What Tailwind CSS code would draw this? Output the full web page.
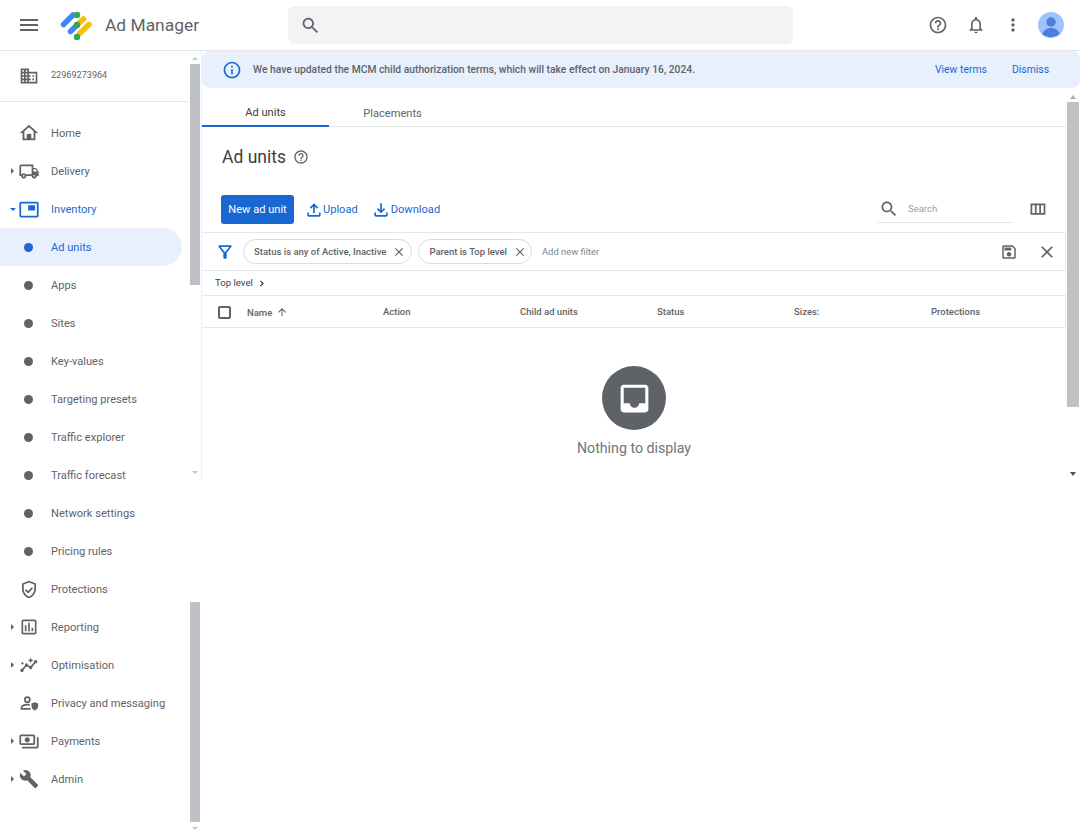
<!DOCTYPE html>
<html lang="en">
<head>
<meta charset="UTF-8">
<title>Ad Manager</title>
<script src="https://cdn.jsdelivr.net/npm/@tailwindcss/browser@4"></script>
</head>
<body class="bg-white font-['Roboto',sans-serif] text-[#5f6368] text-[11.1px] overflow-hidden h-[836px]">

<!-- top bar -->
<header class="h-[51px] flex items-center border-b border-[#e3e5e8]">
  <button class="w-[24px] h-[24px] ml-[17px] text-[#5f6368]">
    <svg viewBox="0 0 24 24" class="w-[24px] h-[24px]" fill="currentColor"><path d="M3 18h18v-2H3v2zm0-5h18v-2H3v2zm0-7v2h18V6H3z"/></svg>
  </button>
  <svg viewBox="0 0 34 34" class="w-[34px] h-[34px] ml-[19px]" fill="none" stroke-linecap="round" stroke-width="5.5">
    <path d="M3.500 16.500L13 7" stroke="#4285f4"/>
    <path d="M10.500 23.500L17 17" stroke="#4285f4"/>
    <path d="M17 17L23.500 11" stroke="#fbbc04"/>
    <path d="M19.500 25.500L29 16.500" stroke="#fbbc04"/>
    <circle cx="17" cy="7" r="3.200" fill="#34a853" stroke="none"/>
    <circle cx="17" cy="17" r="3.200" fill="#34a853" stroke="none"/>
    <circle cx="17" cy="29" r="3.200" fill="#34a853" stroke="none"/>
  </svg>
  <span class="ml-[11px] mt-[1px] text-[17.400px] text-[#5f6368] w-[113px]">Ad Manager</span>
  <div class="ml-[70px] w-[505px] h-[38px] rounded-[6px] bg-[#f1f3f4] flex items-center pl-[12px]">
    <svg viewBox="0 0 24 24" class="w-[21px] h-[21px]" fill="#5f6368"><path d="M15.500 14h-.79l-.28-.27C15.410 12.590 16 11.110 16 9.500 16 5.910 13.090 3 9.500 3S3 5.910 3 9.500 5.910 16 9.500 16c1.610 0 3.090-.59 4.230-1.570l.27.28v.79l5 4.990L20.490 19l-4.990-5zm-6 0C7.010 14 5 11.990 5 9.500S7.010 5 9.500 5 14 7.010 14 9.500 11.990 14 9.500 14z"/></svg>
  </div>
  <div class="ml-auto flex items-center pr-[16px]">
    <svg viewBox="0 0 24 24" class="w-[20px] h-[20px]" fill="#5f6368"><path d="M11 18h2v-2h-2v2zm1-16C6.480 2 2 6.480 2 12s4.480 10 10 10 10-4.480 10-10S17.520 2 12 2zm0 18c-4.410 0-8-3.590-8-8s3.590-8 8-8 8 3.590 8 8-3.590 8-8 8zm0-14c-2.210 0-4 1.790-4 4h2c0-1.100.9-2 2-2s2 .9 2 2c0 2-3 1.750-3 5h2c0-2.250 3-2.500 3-5 0-2.210-1.790-4-4-4z"/></svg>
    <svg viewBox="0 0 24 24" class="w-[20px] h-[20px] ml-[18px]" fill="#5f6368"><path d="M12 22c1.100 0 2-.9 2-2h-4c0 1.100.9 2 2 2zm6-6v-5c0-3.070-1.630-5.640-4.500-6.320V4c0-.83-.67-1.500-1.500-1.500s-1.500.67-1.500 1.500v.68C7.640 5.360 6 7.920 6 11v5l-2 2v1h16v-1l-2-2zm-2 1H8v-6c0-2.480 1.510-4.500 4-4.500s4 2.020 4 4.500v6z"/></svg>
    <svg viewBox="0 0 24 24" class="w-[20px] h-[20px] ml-[17px]" fill="#5f6368"><path d="M12 8c1.100 0 2-.9 2-2s-.9-2-2-2-2 .9-2 2 .9 2 2 2zm0 2c-1.100 0-2 .9-2 2s.9 2 2 2 2-.9 2-2-.9-2-2-2zm0 6c-1.100 0-2 .9-2 2s.9 2 2 2 2-.9 2-2-.9-2-2-2z"/></svg>
    <svg viewBox="0 0 26 26" class="w-[26px] h-[26px] ml-[15px]"><circle cx="13" cy="13" r="13" fill="#a0c3ff"/><circle cx="13" cy="10" r="4.700" fill="#4b7fdb"/><path d="M4.500 22c1-4 4.500-6 8.500-6s7.500 2 8.500 6a13 13 0 0 1-17 0z" fill="#4b7fdb"/></svg>
  </div>
</header>

<div class="flex">
  <!-- side nav -->
  <aside class="relative w-[201px] shrink-0 h-[785px]">
    <div class="w-[188px] h-[51px] flex items-center border-b border-[#e3e5e8]">
      <svg viewBox="0 0 24 24" class="w-[20px] h-[20px] ml-[19px]" fill="#5f6368"><path d="M12 7V3H2v18h20V7H12zM6 19H4v-2h2v2zm0-4H4v-2h2v2zm0-4H4V9h2v2zm0-4H4V5h2v2zm4 12H8v-2h2v2zm0-4H8v-2h2v2zm0-4H8V9h2v2zm0-4H8V5h2v2zm10 12h-8v-2h2v-2h-2v-2h2v-2h-2V9h8v10zm-2-8h-2v2h2v-2zm0 4h-2v2h2v-2z"/></svg>
      <span class="ml-[12px] text-[9.100px]">22969273964</span>
    </div>
    <nav class="pt-[12px]">
      <a class="h-[38px] flex items-center pl-[17px]">
        <svg viewBox="0 0 24 24" class="w-[24px] h-[22px]" fill="#5f6368"><path d="M12 5.690l5 4.500V18H7v-7.810l5-4.500M12 3L2 12h3v8h14v-8h3L12 3z"/><rect x="9.500" y="13" width="5" height="6"/></svg>
        <span class="ml-[10px] pt-[2px]">Home</span>
      </a>
      <a class="h-[38px] flex items-center pl-[11px]">
        <span class="w-0 h-0 border-y-[3px] border-y-transparent border-l-[3px] border-l-[#5f6368]"></span>
        <svg viewBox="0 0 24 24" class="w-[24px] h-[21px] ml-[3px]" fill="#5f6368"><path d="M20 8h-3V4H3c-1.100 0-2 .9-2 2v11h2c0 1.660 1.340 3 3 3s3-1.340 3-3h6c0 1.660 1.340 3 3 3s3-1.340 3-3h2v-5l-3-4zm-.5 1.500l1.960 2.500H17V9.500h2.500zM6 18c-.55 0-1-.45-1-1s.45-1 1-1 1 .45 1 1-.45 1-1 1zm2.220-3c-.55-.61-1.330-1-2.220-1s-1.670.39-2.220 1H3V6h12v9H8.220zM18 18c-.55 0-1-.45-1-1s.45-1 1-1 1 .45 1 1-.45 1-1 1z"/></svg>
        <span class="ml-[10px] pt-[2px]">Delivery</span>
      </a>
      <a class="h-[38px] flex items-center pl-[10px] text-[#1967d2]">
        <span class="w-0 h-0 border-x-[3px] border-x-transparent border-t-[3px] border-t-[#1967d2]"></span>
        <svg viewBox="0 0 24 24" class="w-[24px] h-[21px] ml-[1px]" fill="#1967d2"><path d="M19 7h-8v6h8V7zm2-4H3c-1.100 0-2 .9-2 2v14c0 1.100.9 2 2 2h18c1.100 0 2-.9 2-2V5c0-1.100-.9-2-2-2zm0 16H3V5h18v14z"/></svg>
        <span class="ml-[10px] pt-[2px]">Inventory</span>
      </a>
      <a class="h-[38px] w-[182px] flex items-center pl-[24px] rounded-r-full bg-[#e8f0fe] text-[#1967d2]">
        <span class="w-[9px] h-[9px] rounded-full bg-[#1967d2]"></span>
        <span class="ml-[18px] pt-[2px]">Ad units</span>
      </a>
      <a class="h-[38px] flex items-center pl-[24px]"><span class="w-[9px] h-[9px] rounded-full bg-[#5f6368]"></span><span class="ml-[18px] pt-[2px]">Apps</span></a>
      <a class="h-[38px] flex items-center pl-[24px]"><span class="w-[9px] h-[9px] rounded-full bg-[#5f6368]"></span><span class="ml-[18px] pt-[2px]">Sites</span></a>
      <a class="h-[38px] flex items-center pl-[24px]"><span class="w-[9px] h-[9px] rounded-full bg-[#5f6368]"></span><span class="ml-[18px] pt-[2px]">Key-values</span></a>
      <a class="h-[38px] flex items-center pl-[24px]"><span class="w-[9px] h-[9px] rounded-full bg-[#5f6368]"></span><span class="ml-[18px] pt-[2px]">Targeting presets</span></a>
      <a class="h-[38px] flex items-center pl-[24px]"><span class="w-[9px] h-[9px] rounded-full bg-[#5f6368]"></span><span class="ml-[18px] pt-[2px]">Traffic explorer</span></a>
      <a class="h-[38px] flex items-center pl-[24px]"><span class="w-[9px] h-[9px] rounded-full bg-[#5f6368]"></span><span class="ml-[18px] pt-[2px]">Traffic forecast</span></a>
      <a class="h-[38px] flex items-center pl-[24px]"><span class="w-[9px] h-[9px] rounded-full bg-[#5f6368]"></span><span class="ml-[18px] pt-[2px]">Network settings</span></a>
      <a class="h-[38px] flex items-center pl-[24px]"><span class="w-[9px] h-[9px] rounded-full bg-[#5f6368]"></span><span class="ml-[18px] pt-[2px]">Pricing rules</span></a>
      <a class="h-[38px] flex items-center pl-[17px]">
        <svg viewBox="0 0 24 24" class="w-[24px] h-[21px]" fill="#5f6368"><path d="M12 2L4 5v6.090c0 5.050 3.410 9.760 8 10.910 4.590-1.150 8-5.860 8-10.910V5l-8-3zm6 9.090c0 4-2.550 7.700-6 8.830-3.450-1.130-6-4.820-6-8.830v-4.700l6-2.250 6 2.250v4.700zm-9.180.5L7.400 13l3.540 3.540 5.660-5.660-1.410-1.410-4.250 4.240-1.920-1.620z"/></svg>
        <span class="ml-[10px] pt-[2px]">Protections</span>
      </a>
      <a class="h-[38px] flex items-center pl-[11px]">
        <span class="w-0 h-0 border-y-[3px] border-y-transparent border-l-[3px] border-l-[#5f6368]"></span>
        <svg viewBox="0 0 24 24" class="w-[24px] h-[20px] ml-[3px]" fill="#5f6368"><path d="M19 3H5c-1.100 0-2 .9-2 2v14c0 1.100.9 2 2 2h14c1.100 0 2-.9 2-2V5c0-1.100-.9-2-2-2zm0 16H5V5h14v14zM7 10h2v7H7zm4-3h2v10h-2zm4 6h2v4h-2z"/></svg>
        <span class="ml-[10px] pt-[2px]">Reporting</span>
      </a>
      <a class="h-[38px] flex items-center pl-[11px]">
        <span class="w-0 h-0 border-y-[3px] border-y-transparent border-l-[3px] border-l-[#5f6368]"></span>
        <svg viewBox="0 0 24 24" class="w-[24px] h-[20px] ml-[3px]" fill="#5f6368"><path d="M3 19l6-7 5 3 6-7" fill="none" stroke="#5f6368" stroke-width="2"/><circle cx="3.500" cy="18.500" r="2"/><circle cx="9" cy="12" r="2"/><circle cx="14" cy="15" r="2"/><circle cx="20" cy="8" r="2"/><path d="M14 3l1 2.500 2.500 1-2.500 1-1 2.500-1-2.500-2.500-1 2.500-1zM4 8l.7 1.300L6 10l-1.300.7L4 12l-.7-1.300L2 10l1.300-.7z"/></svg>
        <span class="ml-[10px] pt-[2px]">Optimisation</span>
      </a>
      <a class="h-[38px] flex items-center pl-[17px]">
        <svg viewBox="0 0 24 24" class="w-[24px] h-[20px]" fill="#5f6368"><path d="M10 4a4 4 0 1 0 0 8 4 4 0 0 0 0-8zm0 2a2 2 0 1 1 0 4 2 2 0 0 1 0-4zM10 13c-3.500 0-8 1.700-8 4.500V20h12v-2H4v-.5c0-1 3.300-2.500 6-2.500 1 0 2 .2 3 .5v-2c-1-.3-2-.5-3-.5z"/><path d="M19 11l-4 1.500v3c0 2.500 1.700 4.500 4 5.500 2.300-1 4-3 4-5.500v-3z"/></svg>
        <span class="ml-[10px] pt-[2px]">Privacy and messaging</span>
      </a>
      <a class="h-[38px] flex items-center pl-[11px]">
        <span class="w-0 h-0 border-y-[3px] border-y-transparent border-l-[3px] border-l-[#5f6368]"></span>
        <svg viewBox="0 0 24 24" class="w-[24px] h-[21px] ml-[3px]" fill="#5f6368"><path d="M19 14V6c0-1.100-.9-2-2-2H3c-1.100 0-2 .9-2 2v8c0 1.100.9 2 2 2h14c1.100 0 2-.9 2-2zm-2 0H3V6h14v8zm-7-7c-1.660 0-3 1.340-3 3s1.340 3 3 3 3-1.340 3-3-1.340-3-3-3zm13 0v11c0 1.100-.9 2-2 2H4v-2h17V7h2z"/></svg>
        <span class="ml-[10px] pt-[2px]">Payments</span>
      </a>
      <a class="h-[38px] flex items-center pl-[11px]">
        <span class="w-0 h-0 border-y-[3px] border-y-transparent border-l-[3px] border-l-[#5f6368]"></span>
        <svg viewBox="0 0 24 24" class="w-[24px] h-[20px] ml-[3px]" fill="#5f6368"><path d="M22.700 19l-9.100-9.100c.9-2.300.4-5-1.500-6.900-2-2-5-2.400-7.400-1.300L9 6 6 9 1.600 4.700C.4 7.100.9 10.100 2.900 12.100c1.900 1.900 4.600 2.400 6.900 1.500l9.100 9.100c.4.4 1 .4 1.400 0l2.300-2.300c.5-.4.5-1.100.1-1.400z"/></svg>
        <span class="ml-[10px] pt-[2px]">Admin</span>
      </a>
    </nav>
    <!-- side nav scrollbar -->
    <span class="absolute left-[192px] top-[6px] w-0 h-0 border-x-[3px] border-x-transparent border-b-[3px] border-b-[#c1c4c8]"></span>
    <div class="absolute left-[190px] top-[13px] w-[10px] h-[221px] bg-[#bdc1c6]"></div>
    <span class="absolute left-[192px] top-[420px] w-0 h-0 border-x-[3px] border-x-transparent border-t-[3px] border-t-[#c1c4c8]"></span>
    <div class="absolute left-[190px] top-[551px] w-[10px] h-[220px] bg-[#bdc1c6]"></div>
    <span class="absolute left-[192px] top-[776px] w-0 h-0 border-x-[3px] border-x-transparent border-t-[3px] border-t-[#c1c4c8]"></span>
  </aside>

  <!-- main panel -->
  <main class="relative flex-1 h-[429px] border-l border-[#eeeeee] overflow-hidden">
    <div class="h-[37px] bg-[#e8f0fe] rounded-[8px] flex items-center pl-[20px] pr-[31px]">
      <svg viewBox="0 0 24 24" class="w-[20px] h-[20px]" fill="#1967d2"><path d="M11 7h2v2h-2zm0 4h2v6h-2zm1-9C6.480 2 2 6.480 2 12s4.480 10 10 10 10-4.480 10-10S17.520 2 12 2zm0 18c-4.410 0-8-3.590-8-8s3.590-8 8-8 8 3.590 8 8-3.590 8-8 8z"/></svg>
      <span class="ml-[11px] text-[10.300px] font-medium text-[#5f6368]">We have updated the MCM child authorization terms, which will take effect on January 16, 2024.</span>
      <span class="ml-auto pt-[1px] text-[10.400px] text-[#1967d2]">View terms</span>
      <span class="ml-[25px] pt-[1px] text-[10.400px] text-[#1967d2]">Dismiss</span>
    </div>

    <div class="w-[864px]">
      <div class="flex h-[39px] border-b border-[#e6e7e9]">
        <div class="w-[127px] h-[39px] pt-[14px] border-b-2 border-[#1967d2] flex items-center justify-center text-[#3c4043]">Ad units</div>
        <div class="w-[127px] pt-[15px] flex items-center justify-center">Placements</div>
      </div>

      <div class="h-[68px] pl-[20px] pt-[19px] flex items-start">
        <h1 class="text-[17.500px] leading-[22px] text-[#3c4043]">Ad units</h1>
        <svg viewBox="0 0 24 24" class="w-[16px] h-[16px] ml-[7px] mt-[3px]" fill="#5f6368"><path d="M11 18h2v-2h-2v2zm1-16C6.480 2 2 6.480 2 12s4.480 10 10 10 10-4.480 10-10S17.520 2 12 2zm0 18c-4.410 0-8-3.590-8-8s3.590-8 8-8 8 3.590 8 8-3.590 8-8 8zm0-14c-2.210 0-4 1.790-4 4h2c0-1.100.9-2 2-2s2 .9 2 2c0 2-3 1.750-3 5h2c0-2.250 3-2.500 3-5 0-2.210-1.790-4-4-4z"/></svg>
      </div>

      <div class="h-[37px] flex items-start pl-[19px]">
        <button class="w-[73px] h-[29px] pt-[2px] rounded-[3px] bg-[#1967d2] text-white">New ad unit</button>
        <span class="ml-[10px] h-[29px] flex items-center text-[#1967d2]">
          <svg viewBox="0 0 24 24" class="w-[20px] h-[20px] -mr-[1px]" fill="#1967d2"><path d="M11 16V7.850l-2.600 2.600L7 9l5-5 5 5-1.400 1.450-2.600-2.600V16h-2zm-5 4c-.55 0-1.020-.2-1.410-.59C4.200 19.020 4 18.550 4 18v-3h2v3h12v-3h2v3c0 .55-.2 1.020-.59 1.410-.39.39-.86.59-1.410.59H6z"/></svg><span class="pt-[2px]">Upload</span>
        </span>
        <span class="ml-[13px] h-[29px] flex items-center text-[#1967d2]">
          <svg viewBox="0 0 24 24" class="w-[20px] h-[20px]" fill="#1967d2"><path d="M12 16l-5-5 1.400-1.450 2.600 2.600V4h2v8.150l2.600-2.600L17 11l-5 5zm-6 4c-.55 0-1.020-.2-1.410-.59C4.200 19.020 4 18.550 4 18v-3h2v3h12v-3h2v3c0 .55-.2 1.020-.59 1.410-.39.39-.86.59-1.410.59H6z"/></svg><span class="pt-[2px]">Download</span>
        </span>
        <div class="ml-auto mr-[52px] mt-[1px] w-[137px] h-[27px] border-b border-[#e6e7e9] flex items-center">
          <svg viewBox="0 0 24 24" class="w-[20px] h-[20px] ml-[2px]" fill="#5f6368"><path d="M15.500 14h-.79l-.28-.27C15.410 12.590 16 11.110 16 9.500 16 5.910 13.090 3 9.500 3S3 5.910 3 9.500 5.910 16 9.500 16c1.610 0 3.090-.59 4.230-1.570l.27.28v.79l5 4.990L20.490 19l-4.990-5zm-6 0C7.010 14 5 11.990 5 9.500S7.010 5 9.500 5 14 7.010 14 9.500 11.990 14 9.500 14z"/></svg>
          <span class="ml-[9px] pt-[1px] text-[9.500px] text-[#9aa0a6]">Search</span>
        </div>
        <svg viewBox="0 0 24 24" class="w-[21px] h-[21px] absolute left-[825px] top-[148px]" fill="#5f6368"><path d="M4 5v13h17V5H4zm10 2v9h-3V7h3zM6 7h3v9H6V7zm13 9h-3V7h3v9z"/></svg>
      </div>

      <div class="h-[39px] border-y border-[#e6e7e9] border-r flex items-center pl-[13px] pr-[8px]">
        <svg viewBox="0 0 24 24" class="w-[20px] h-[20px]" fill="#1967d2"><path d="M7 6h10l-5.010 6.300L7 6zm-2.750-.39C6.270 8.200 10 13 10 13v6c0 .55.45 1 1 1h2c.55 0 1-.45 1-1v-6s3.720-4.800 5.740-7.390c.51-.66.04-1.610-.79-1.610H5.040c-.83 0-1.300.95-.79 1.610z"/></svg>
        <span class="ml-[8px] h-[25px] pl-[10px] pr-[5px] rounded-full border border-[#dadce0] flex items-center text-[9.500px] font-medium"><span class="pt-[1px]">Status is any of Active, Inactive</span>
          <svg viewBox="0 0 24 24" class="w-[14px] h-[14px] ml-[6px]" fill="#5f6368"><path d="M19 6.410L17.590 5 12 10.590 6.410 5 5 6.410 10.590 12 5 17.590 6.410 19 12 13.410 17.590 19 19 17.590 13.410 12z"/></svg>
        </span>
        <span class="ml-[6px] h-[25px] pl-[10px] pr-[4px] rounded-full border border-[#dadce0] flex items-center text-[9.500px] font-medium"><span class="pt-[1px]">Parent is Top level</span>
          <svg viewBox="0 0 24 24" class="w-[14px] h-[14px] ml-[6px]" fill="#5f6368"><path d="M19 6.410L17.590 5 12 10.590 6.410 5 5 6.410 10.590 12 5 17.590 6.410 19 12 13.410 17.590 19 19 17.590 13.410 12z"/></svg>
        </span>
        <span class="ml-[10px] pt-[1px] text-[9.400px] text-[#80868b]">Add new filter</span>
        <svg viewBox="0 0 24 24" class="w-[18px] h-[18px] ml-auto" fill="#5f6368"><path d="M17 3H5c-1.110 0-2 .9-2 2v14c0 1.100.89 2 2 2h14c1.100 0 2-.9 2-2V7l-4-4zm2 16H5V5h11.170L19 7.830V19zm-7-7c-1.660 0-3 1.340-3 3s1.340 3 3 3 3-1.340 3-3-1.340-3-3-3zM6 6h9v4H6z"/></svg>
        <svg viewBox="0 0 24 24" class="w-[20px] h-[20px] ml-[19px]" fill="#5f6368"><path d="M19 6.410L17.590 5 12 10.590 6.410 5 5 6.410 10.590 12 5 17.590 6.410 19 12 13.410 17.590 19 19 17.590 13.410 12z"/></svg>
      </div>

      <div class="h-[24px] flex items-center pl-[13px] text-[9.600px] text-[#3c4043]">Top level
        <svg viewBox="0 0 24 24" class="w-[9px] h-[9px] ml-[4px]" fill="none" stroke="#3c4043" stroke-width="3.500"><path d="M9 5l7 7-7 7"/></svg>
      </div>

      <div class="h-[33px] pt-[1px] border-y border-r border-[#e6e7e9] grid grid-cols-[181px_137px_137px_137px_137px_1fr] items-center text-[9.500px] font-medium">
        <div class="flex items-center pl-[16px]">
          <span class="w-[13px] h-[13px] border-2 border-[#5f6368] rounded-[2px]"></span>
          <span class="ml-[16px] mt-[2px]">Name</span>
          <svg viewBox="0 0 24 24" class="w-[12px] h-[12px] ml-[4px]" fill="#5f6368"><path d="M13 20h-2V8l-5.500 5.500-1.420-1.420L12 4.160l7.920 7.920-1.420 1.420L13 8z"/></svg>
        </div>
        <div>Action</div>
        <div>Child ad units</div>
        <div>Status</div>
        <div>Sizes:</div>
        <div>Protections</div>
      </div>

      <div class="flex flex-col items-center pt-[38px]">
        <div class="w-[64px] h-[64px] rounded-full bg-[#5f6368] flex items-center justify-center">
          <svg viewBox="0 0 24 24" class="w-[37px] h-[37px]" fill="#ffffff"><path d="M19 3H4.990c-1.110 0-1.980.89-1.980 2L3 19c0 1.100.88 2 1.990 2H19c1.100 0 2-.9 2-2V5c0-1.110-.9-2-2-2zm0 12h-4c0 1.660-1.350 3-3 3s-3-1.340-3-3H5V5h14v10z"/></svg>
        </div>
        <p class="mt-[8px] text-[14.200px] text-[#70757a]">Nothing to display</p>
      </div>
    </div>

    <!-- main scrollbar -->
    <span class="absolute left-[868px] top-[44px] w-0 h-0 border-x-[3.500px] border-x-transparent border-b-[4px] border-b-[#b0b0b0]"></span>
    <div class="absolute left-[865px] top-[51px] w-[12px] h-[305px] bg-[#c1c1c1]"></div>
    <span class="absolute left-[868px] top-[421px] w-0 h-0 border-x-[3.500px] border-x-transparent border-t-[4px] border-t-[#505050]"></span>
  </main>
</div>
</body>
</html>
